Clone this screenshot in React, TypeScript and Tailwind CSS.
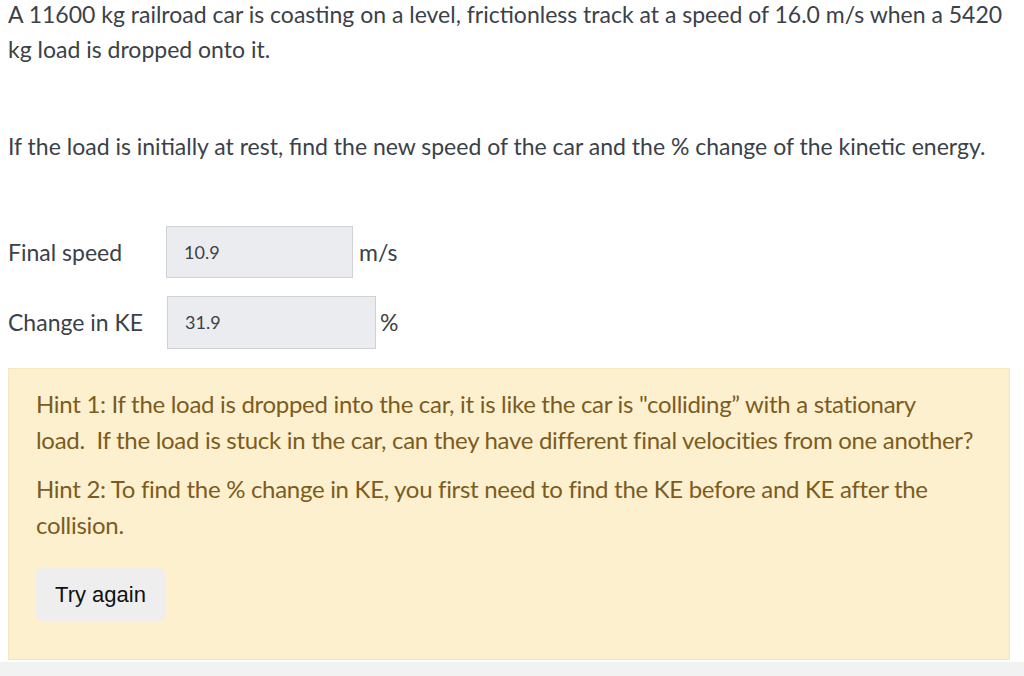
export default function App() {
  return (
    <div className="flex min-h-[676px] flex-col bg-white font-['Lato',sans-serif] text-[#3b4148]">
      <div className="flex flex-1 flex-col px-2">
        <p className="-mt-[3px] text-[23px] leading-[35px]">
          A 11600 kg railroad car is coasting on a level, frictionless track at a speed of 16.0 m/s when a 5420 kg load is dropped onto it.
        </p>
        <p className="mt-[62px] text-[23px] leading-[35px]">
          If the load is initially at rest, find the new speed of the car and the % change of the kinetic energy.
        </p>

        <div className="mt-[62px] flex items-center">
          <span className="w-[158px] text-[23px]">Final speed</span>
          <div className="flex h-[52px] w-[187px] items-center border border-[#cfd1d4] bg-[#ebecef] px-[17px] text-[18px] text-[#3b4148]">
            10.9
          </div>
          <span className="ml-[6px] text-[23px]">m/s</span>
        </div>

        <div className="mt-[18px] flex items-center">
          <span className="w-[159px] text-[23px]">Change in KE</span>
          <div className="flex h-[53px] w-[209px] items-center border border-[#cfd1d4] bg-[#ebecef] px-[17px] text-[18px] text-[#3b4148]">
            31.9
          </div>
          <span className="ml-[4px] text-[23px]">%</span>
        </div>

        <div className="mt-[19px] mr-[6px] flex h-[292px] flex-col border border-[#f5e6bd] bg-[#fcf0cf] pl-[27px] pt-[17px] text-[#7c5c1e]">
          <p className="whitespace-nowrap text-[24px] leading-[36px] tracking-[-0.3px]">
            Hint 1: If the load is dropped into the car, it is like the car is "colliding” with a stationary
            <br />
            load.&nbsp; If the load is stuck in the car, can they have different final velocities from one another?
          </p>
          <p className="mt-[13px] whitespace-nowrap text-[24px] leading-[36px] tracking-[-0.3px]">
            Hint 2: To find the % change in KE, you first need to find the KE before and KE after the
            <br />
            collision.
          </p>
          <button className="mt-[25px] h-[53px] w-[129px] rounded-[6px] bg-[#eeeeee] font-['Liberation_Sans',sans-serif] text-[22px] text-[#111]">
            Try again
          </button>
        </div>
      </div>
      <div className="mt-px h-[14px] bg-[#f2f2f2]" />
    </div>
  );
}
